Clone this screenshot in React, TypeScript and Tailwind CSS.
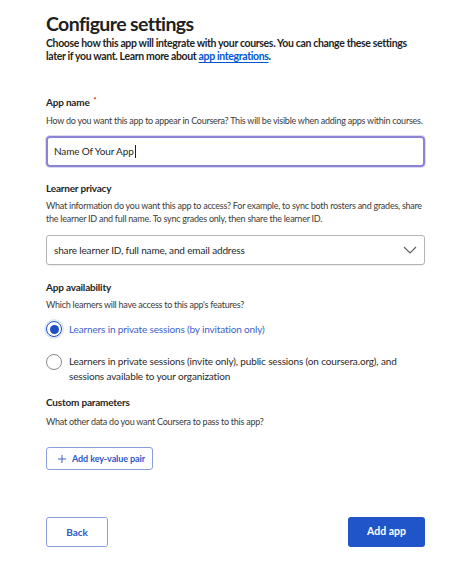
import React from "react";

const font = { fontFamily: "Lato, 'Noto Sans', sans-serif" };

function Label({ children, required }: { children: React.ReactNode; required?: boolean }) {
  return (
    <div className="h-[14px] text-[10px] font-bold leading-[14px] tracking-[-0.2px] text-[#1f1f1f]">
      {children}
      {required && <span className="ml-[4px] align-top text-[7px] leading-[10px] text-[#d30001]">*</span>}
    </div>
  );
}

function Help({ children }: { children: React.ReactNode }) {
  return <p className="whitespace-nowrap text-[9px] leading-[13px] tracking-[-0.25px] text-[#3b3b3b]">{children}</p>;
}

export default function App() {
  return (
    <div className="min-h-[570px] w-[474px] bg-white text-[#1f1f1f]" style={font}>
      <div className="ml-[46px] w-[379px] pt-[11px]">
        <h1 className="text-[19.5px] font-bold leading-[26px] tracking-[-0.6px]">Configure settings</h1>
        <p className="whitespace-nowrap text-[10.5px] font-bold leading-[13px] tracking-[-0.35px]">
          Choose how this app will integrate with your courses. You can change these settings
          <br />
          later if you want. Learn more about{" "}
          <a href="#" className="text-[#0056d2] underline underline-offset-2">
            app integrations
          </a>
          .
        </p>

        <div className="mt-[32px]">
          <Label required>App name</Label>
          <div className="mt-[5px]">
            <Help>How do you want this app to appear in Coursera? This will be visible when adding apps within courses.</Help>
          </div>
          <div className="mt-[9px] flex h-[31px] items-center rounded-[4px] border-2 border-[#8b84d4] px-[6px] text-[10px] tracking-[-0.15px] shadow-[0_0_0_1px_#dcd9f3]">
            Name Of Your App<span className="ml-px inline-block h-[13px] w-px bg-[#1f1f1f]" />
          </div>
        </div>

        <div className="mt-[14px]">
          <Label>Learner privacy</Label>
          <div className="mt-[4px]">
            <Help>
              What information do you want this app to access? For example, to sync both rosters and grades, share
              <br />
              the learner ID and full name. To sync grades only, then share the learner ID.
            </Help>
          </div>
          <div className="mt-[10px] flex h-[30px] items-center justify-between rounded-[3px] border border-[#b4b4b4] pl-[7px] pr-[7px] text-[10px] tracking-[-0.15px] shadow-[0_1px_1px_rgba(0,0,0,0.08)]">
            <span>share learner ID, full name, and email address</span>
            <svg width="14" height="8" viewBox="0 0 14 8" fill="none" stroke="#5f5f5f" strokeWidth="1.1">
              <path d="M1 1l6 6 6-6" />
            </svg>
          </div>
        </div>

        <div className="mt-[15px]">
          <Label>App availability</Label>
          <div className="mt-[4px]">
            <Help>Which learners will have access to this app's features?</Help>
          </div>
          <div className="mt-[10px] flex h-[16px] items-center gap-[7px]">
            <span className="flex h-[16px] w-[16px] shrink-0 items-center justify-center rounded-full border-[1.5px] border-[#1f4fc4] shadow-[0_0_0_2px_#dfe7f8]">
              <span className="h-[9px] w-[9px] rounded-full bg-[#1f4fc4]" />
            </span>
            <span className="text-[10px] leading-[16px] tracking-[-0.15px] text-[#3c62c9]">
              Learners in private sessions (by invitation only)
            </span>
          </div>
          <div className="mt-[17px] flex items-start gap-[7px]">
            <span className="h-[16px] w-[16px] shrink-0 rounded-full border border-[#8a8a8a]" />
            <span className="whitespace-nowrap text-[10px] leading-[15px] tracking-[-0.15px] text-[#2a2a2a]">
              Learners in private sessions (invite only), public sessions (on coursera.org), and
              <br />
              sessions available to your organization
            </span>
          </div>
        </div>

        <div className="mt-[11px]">
          <Label>Custom parameters</Label>
          <div className="mt-[6px]">
            <Help>What other data do you want Coursera to pass to this app?</Help>
          </div>
          <button className="mt-[19px] flex h-[23px] w-[107px] items-center gap-[6px] rounded-[3px] border border-[#8aa0dc] pl-[11px] text-[9px] font-bold tracking-[-0.1px] text-[#2f57c6]">
            <svg width="8" height="8" viewBox="0 0 8 8" stroke="#3f63c9" strokeWidth="1">
              <path d="M4 0v8M0 4h8" />
            </svg>
            Add key-value pair
          </button>
        </div>

        <div className="mt-[47px] flex items-center justify-between">
          <button className="h-[30px] w-[62px] rounded-[3px] border border-[#8aa0dc] text-[10px] font-bold text-[#2f57c6]">
            Back
          </button>
          <button className="h-[30px] w-[77px] rounded-[3px] bg-[#1f55c8] text-[10.5px] font-bold text-white">
            Add app
          </button>
        </div>
      </div>
    </div>
  );
}
